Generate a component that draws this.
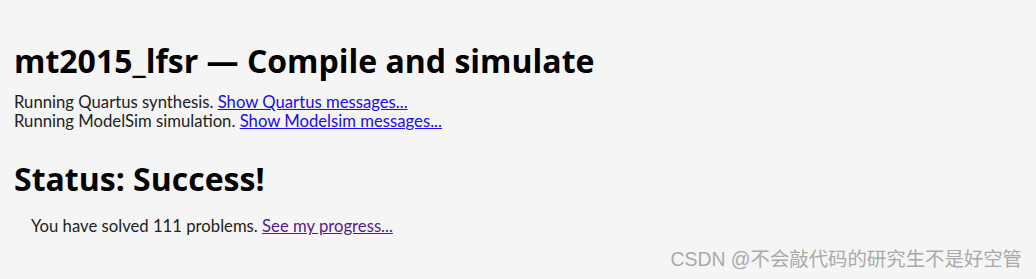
import React from 'react';

export default function App() {
  return (
    <div className="min-h-[279px] w-full bg-[#f5f5f5] relative overflow-hidden">
      <div className="px-[14px] pt-[41px]">
        <h1 className="text-[32px] leading-[40px] font-bold text-black font-['Open_Sans',sans-serif]">
          mt2015_lfsr — Compile and simulate
        </h1>
        <div className="mt-[12px] text-[16.7px] leading-[19px] text-[#222] font-['Lato',sans-serif]">
          <div>
            Running Quartus synthesis.{' '}
            <a href="#" className="text-[#1a0dee] underline">Show Quartus messages...</a>
          </div>
          <div>
            Running ModelSim simulation.{' '}
            <a href="#" className="text-[#1a0dee] underline">Show Modelsim messages...</a>
          </div>
        </div>
        <h2 className="mt-[28px] text-[32px] leading-[40px] font-bold text-black font-['Open_Sans',sans-serif]">
          Status: Success!
        </h2>
        <p className="mt-[18px] pl-[17px] text-[16.7px] leading-[19px] text-[#222] font-['Lato',sans-serif]">
          You have solved 111 problems.{' '}
          <a href="#" className="text-[#551a8b] underline">See my progress...</a>
        </p>
      </div>
      <div className="absolute right-[14px] bottom-[8px] text-[19.4px] leading-[24px] text-[#aaa] font-['Liberation_Sans','Noto_Sans_CJK_SC',sans-serif]">
        CSDN @不会敲代码的研究生不是好空管
      </div>
    </div>
  );
}
